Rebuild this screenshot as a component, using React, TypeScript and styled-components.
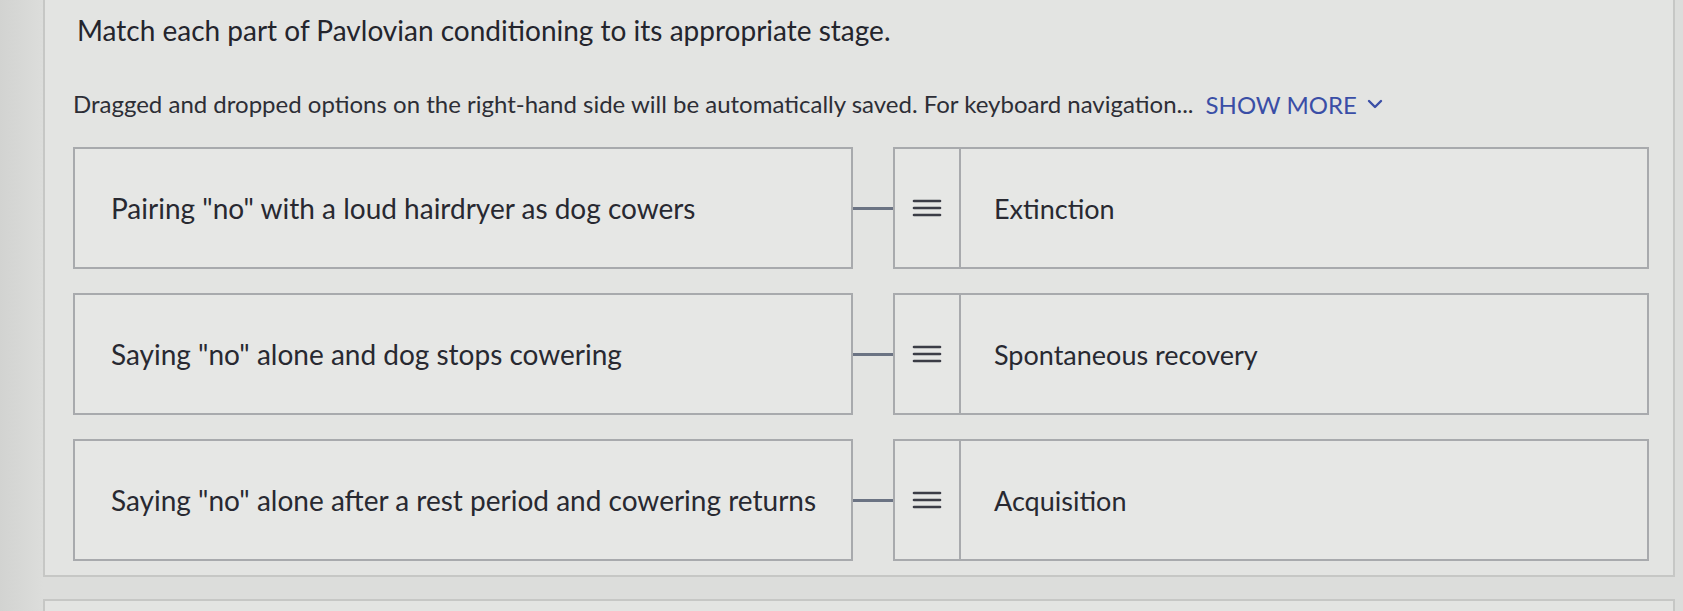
import * as React from "react";
import styled, { createGlobalStyle } from "styled-components";

const GlobalStyle = createGlobalStyle`
  html, body {
    margin: 0;
    padding: 0;
    background: #d8d9d7;
  }
  body {
    font-family: Lato, "Liberation Sans", sans-serif;
    color: #2f3038;
  }
`;

const Page = styled.div`
  width: 1683px;
  height: 611px;
  overflow: hidden;
  padding-left: 43px;
  box-sizing: border-box;
  background: linear-gradient(90deg, #d2d3d1 0px, #dcdddb 43px);
`;

const Panel = styled.div`
  width: 1632px;
  box-sizing: border-box;
  background: #e3e4e2;
  border-left: 2px solid #c6c7c5;
  border-right: 2px solid #c6c7c5;
  border-bottom: 2px solid #c6c7c5;
  padding: 12px 24px 14px 28px;
`;

const NextPanel = styled.div`
  width: 1632px;
  height: 40px;
  margin-top: 22px;
  box-sizing: border-box;
  background: #e3e4e2;
  border: 2px solid #c6c7c5;
`;

const Title = styled.h1`
  margin: 0 0 0 4px;
  font-size: 28px;
  line-height: 36px;
  font-weight: 400;
  color: #24252d;
`;

const Instructions = styled.p`
  margin: 41px 0 0 0;
  font-size: 24px;
  line-height: 30px;
  color: #2d2e36;
  display: flex;
  align-items: center;
`;

const ShowMore = styled.button`
  margin-left: 12px;
  padding: 0;
  border: none;
  background: none;
  font-family: inherit;
  font-size: 24px;
  color: #3a4ea6;
  display: inline-flex;
  align-items: center;
  gap: 10px;
  cursor: pointer;
`;

const Rows = styled.div`
  margin-top: 28px;
  display: flex;
  flex-direction: column;
  gap: 24px;
`;

const Row = styled.div`
  display: grid;
  grid-template-columns: 780px 40px 1fr;
  height: 122px;
`;

const Prompt = styled.div`
  border: 2px solid #a8aaad;
  background: #e6e7e5;
  display: flex;
  align-items: center;
  padding-left: 36px;
  font-size: 28px;
  color: #282931;
`;

const Connector = styled.div`
  align-self: center;
  height: 3px;
  background: #6b7383;
`;

const Answer = styled.div`
  border: 2px solid #a8aaad;
  background: #e6e7e5;
  display: flex;
  align-items: stretch;
`;

const Handle = styled.div`
  width: 64px;
  border-right: 2px solid #a8aaad;
  display: flex;
  align-items: center;
  justify-content: center;
`;

const Label = styled.div`
  display: flex;
  align-items: center;
  padding-left: 33px;
  font-size: 27px;
  color: #282931;
`;

const HandleIcon = () => (
  <svg width="30" height="18" viewBox="0 0 30 18">
    <g stroke="#3b3d46" strokeWidth="2.6" strokeLinecap="round">
      <line x1="2" y1="2" x2="28" y2="2" />
      <line x1="2" y1="9" x2="28" y2="9" />
      <line x1="2" y1="16" x2="28" y2="16" />
    </g>
  </svg>
);

const Chevron = () => (
  <svg width="16" height="10" viewBox="0 0 16 10">
    <path d="M2 2 L8 8 L14 2" fill="none" stroke="#3a4ea6" strokeWidth="2.4" strokeLinecap="round" strokeLinejoin="round" />
  </svg>
);

const pairs = [
  { prompt: 'Pairing "no" with a loud hairdryer as dog cowers', answer: "Extinction" },
  { prompt: 'Saying "no" alone and dog stops cowering', answer: "Spontaneous recovery" },
  { prompt: 'Saying "no" alone after a rest period and cowering returns', answer: "Acquisition" },
];

const App: React.FC = () => {
  return (
    <>
      <GlobalStyle />
      <Page>
        <Panel>
          <Title>Match each part of Pavlovian conditioning to its appropriate stage.</Title>
          <Instructions>
            Dragged and dropped options on the right-hand side will be automatically saved. For keyboard navigation...
            <ShowMore>
              SHOW MORE <Chevron />
            </ShowMore>
          </Instructions>
          <Rows>
            {pairs.map((p) => (
              <Row key={p.answer}>
                <Prompt>{p.prompt}</Prompt>
                <Connector />
                <Answer>
                  <Handle>
                    <HandleIcon />
                  </Handle>
                  <Label>{p.answer}</Label>
                </Answer>
              </Row>
            ))}
          </Rows>
        </Panel>
        <NextPanel />
      </Page>
    </>
  );
};

export default App;
